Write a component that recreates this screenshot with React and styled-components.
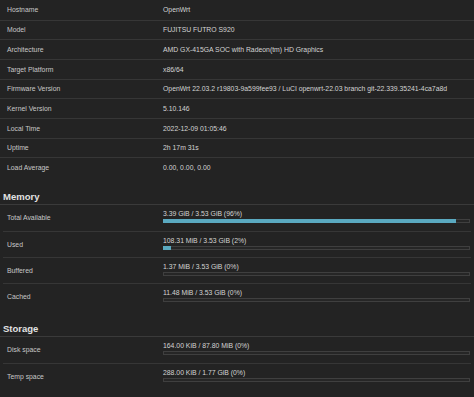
import React from "react";
import styled, { createGlobalStyle } from "styled-components";

const Global = createGlobalStyle`
  html, body { margin: 0; padding: 0; background: #232323; }
  body { font-family: "Liberation Sans", Arial, sans-serif; color: #cfcfcf; }
`;

const Page = styled.div`
  width: 474px;
  height: 397px;
  overflow: hidden;
  background: #232323;
`;

const Table = styled.div`
  display: flex;
  flex-direction: column;
  padding: 0 ${(p) => p.$inset || 0}px;
`;

const Row = styled.div`
  display: grid;
  grid-template-columns: ${(p) => p.$labelW}px 1fr;
  align-items: center;
  height: ${(p) => p.$h}px;
  box-sizing: border-box;
  border-top: ${(p) => (p.$first ? "none" : "1px solid #363636")};
  font-size: 6.85px;
`;

const Label = styled.div`
  padding-left: ${(p) => p.$pad}px;
  color: #c8c8c8;
  white-space: nowrap;
`;

const Value = styled.div`
  color: #d4d4d4;
  white-space: nowrap;
`;

const Heading = styled.div`
  height: 28px;
  box-sizing: border-box;
  padding: 14px 0 0 3px;
  font-size: 9.5px;
  font-weight: bold;
  color: #e2e2e2;
  border-bottom: 1px solid #3a3a3a;
`;

const BarCell = styled.div`
  display: flex;
  flex-direction: column;
  gap: 2px;
  padding-right: 1px;
  margin-top: -2px;
`;

const Track = styled.div`
  height: 4px;
  box-sizing: border-box;
  border: 1px solid #3f3f3f;
  background: #262626;
`;

const Fill = styled.div`
  background: #5aa9c0;
  margin: -1px 0 -1px -1px;
  height: 4px;
`;

const info = [
  ["Hostname", "OpenWrt"],
  ["Model", "FUJITSU FUTRO S920"],
  ["Architecture", "AMD GX-415GA SOC with Radeon(tm) HD Graphics"],
  ["Target Platform", "x86/64"],
  ["Firmware Version", "OpenWrt 22.03.2 r19803-9a599fee93 / LuCI openwrt-22.03 branch git-22.339.35241-4ca7a8d"],
  ["Kernel Version", "5.10.146"],
  ["Local Time", "2022-12-09 01:05:46"],
  ["Uptime", "2h 17m 31s"],
  ["Load Average", "0.00, 0.00, 0.00"],
];

const memory = [
  ["Total Available", "3.39 GiB / 3.53 GiB (96%)", 96],
  ["Used", "108.31 MiB / 3.53 GiB (2%)", 2.5],
  ["Buffered", "1.37 MiB / 3.53 GiB (0%)", 0],
  ["Cached", "11.48 MiB / 3.53 GiB (0%)", 0],
];

const storage = [
  ["Disk space", "164.00 KiB / 87.80 MiB (0%)", 0],
  ["Temp space", "288.00 KiB / 1.77 GiB (0%)", 0],
];

function BarRows({ rows }) {
  return (
    <Table $inset={3}>
      {rows.map(([l, v, pct], i) => (
        <Row key={l} $labelW={160} $h={26} $first={i === 0}>
          <Label $pad={4}>{l}</Label>
          <BarCell>
            <Value>{v}</Value>
            <Track>
              {pct > 0 && <Fill style={{ width: `${pct}%` }} />}
            </Track>
          </BarCell>
        </Row>
      ))}
    </Table>
  );
}

export default function App() {
  return (
    <Page>
      <Global />
      <Table>
        {info.map(([l, v], i) => (
          <Row key={l} $labelW={163} $h={19.67} $first={i === 0}>
            <Label $pad={7}>{l}</Label>
            <Value>{v}</Value>
          </Row>
        ))}
      </Table>
      <Heading>Memory</Heading>
      <BarRows rows={memory} />
      <Heading>Storage</Heading>
      <BarRows rows={storage} />
    </Page>
  );
}
